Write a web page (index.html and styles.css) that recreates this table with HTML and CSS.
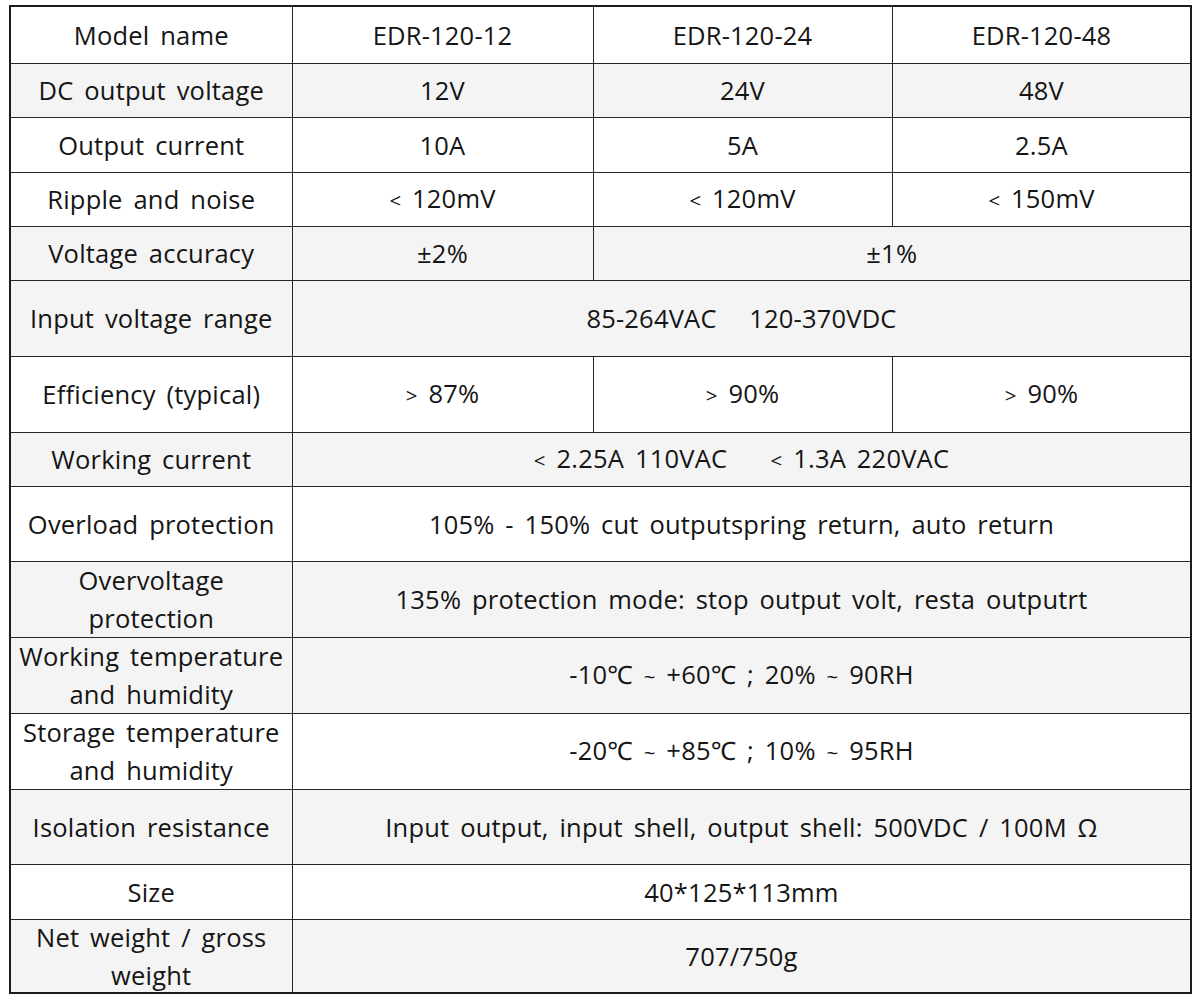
FILE: index.html
```html
<!DOCTYPE html>
<html>
<head>
<meta charset="utf-8">
<link rel="stylesheet" href="styles.css">
</head>
<body>
<table class="spec">
  <colgroup>
    <col class="c-label">
    <col class="c-val">
    <col class="c-val2">
    <col class="c-val2">
  </colgroup>
  <tbody>
    <tr class="h58"><td>Model name</td><td>EDR-120-12</td><td>EDR-120-24</td><td>EDR-120-48</td></tr>
    <tr class="h54 gray"><td>DC output voltage</td><td>12V</td><td>24V</td><td>48V</td></tr>
    <tr class="h55"><td>Output current</td><td>10A</td><td>5A</td><td>2.5A</td></tr>
    <tr class="h54"><td>Ripple and noise</td><td><span class="lt">&lt;</span> 120mV</td><td><span class="lt">&lt;</span> 120mV</td><td><span class="lt">&lt;</span> 150mV</td></tr>
    <tr class="h54 gray"><td>Voltage accuracy</td><td>±2%</td><td colspan="3">±1%</td></tr>
    <tr class="h76 gray"><td>Input voltage range</td><td colspan="3">85-264VAC&nbsp;&nbsp; 120-370VDC</td></tr>
    <tr class="h76"><td>Efficiency (typical)</td><td><span class="lt">&gt;</span> 87%</td><td><span class="lt">&gt;</span> 90%</td><td><span class="lt">&gt;</span> 90%</td></tr>
    <tr class="h54 gray"><td>Working current</td><td colspan="3"><span class="lt">&lt;</span> 2.25A 110VAC&nbsp;&nbsp;&nbsp; <span class="lt">&lt;</span> 1.3A 220VAC</td></tr>
    <tr class="h75"><td>Overload protection</td><td colspan="3">105% - 150% cut outputspring return, auto return</td></tr>
    <tr class="h76 gray"><td><div class="two">Overvoltage<br>protection</div></td><td colspan="3">135% protection mode: stop output volt, resta outputrt</td></tr>
    <tr class="h76 gray"><td><div class="two">Working temperature<br>and humidity</div></td><td colspan="3">-10℃ <span class="lt">~</span> +60℃ ; 20% <span class="lt">~</span> 90RH</td></tr>
    <tr class="h76"><td><div class="two">Storage temperature<br>and humidity</div></td><td colspan="3">-20℃ <span class="lt">~</span> +85℃ ; 10% <span class="lt">~</span> 95RH</td></tr>
    <tr class="h75 gray"><td>Isolation resistance</td><td colspan="3">Input output, input shell, output shell: 500VDC / 100M Ω</td></tr>
    <tr class="h55"><td>Size</td><td colspan="3">40*125*113mm</td></tr>
    <tr class="h74 gray"><td><div class="two">Net weight / gross<br>weight</div></td><td colspan="3">707/750g</td></tr>
  </tbody>
</table>
</body>
</html>
```

FILE: styles.css
```css
html, body {
  margin: 0;
  padding: 0;
  background: #ffffff;
}
body {
  padding: 5px 0 0 9px;
  font-family: "Open Sans", "Noto Sans", "Noto Sans CJK KR", sans-serif;
  color: #151515;
}
.spec {
  border-collapse: collapse;
  table-layout: fixed;
  width: 1181px;
  border: 2px solid #1c1c1c;
}
.c-label { width: 282px; }
.c-val { width: 301px; }
.c-val2 { width: 299px; }
.spec td {
  border: 1px solid #262626;
  text-align: center;
  vertical-align: middle;
  padding: 0;
  font-size: 25.5px;
  line-height: 30px;
  letter-spacing: 0.2px;
  word-spacing: 4px;
  white-space: nowrap;
}
.spec td .two {
  line-height: 38px;
  margin: -6px 0;
}
.spec tr.gray td { background: #f4f4f4; }
.spec tr.h54 { height: 54px; }
.spec tr.h55 { height: 55px; }
.spec tr.h58 { height: 57px; }
.spec tr.h74 { height: 74px; }
.spec tr.h75 { height: 75px; }
.spec tr.h76 { height: 76px; }
.lt { font-size: 0.8em; }
```
